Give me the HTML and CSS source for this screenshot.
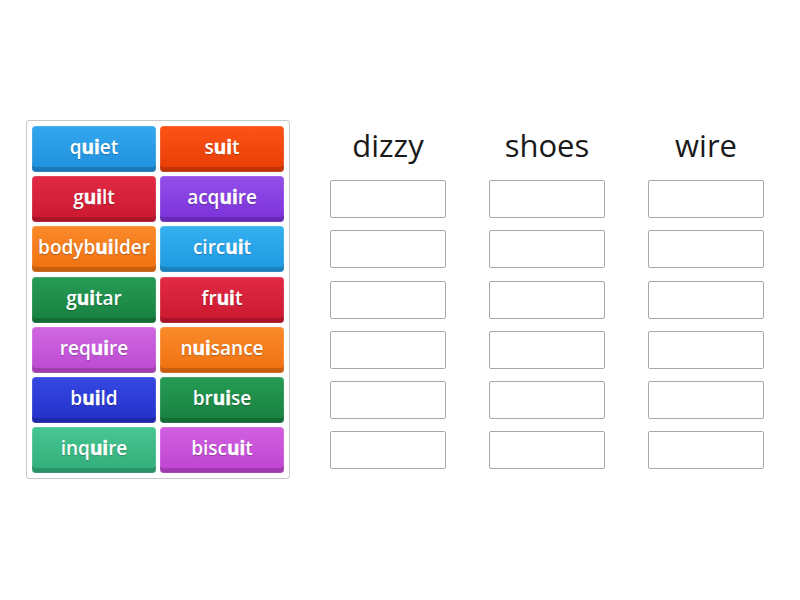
FILE: index.html
```html
<!DOCTYPE html>
<html lang="en">
<head>
    <meta charset="UTF-8">
    <meta name="viewport" content="width=device-width, initial-scale=1.0">
    <title>Group sort - ui words</title>
    <link rel="stylesheet" href="styles.css">
</head>
<body>

<div class="board">
    <!-- word tiles to drag -->
    <div class="tiles">
        <div class="tile blue">q<b>ui</b>et</div>
        <div class="tile orange-red">s<b>ui</b>t</div>
        <div class="tile red">g<b>ui</b>lt</div>
        <div class="tile purple">acq<b>ui</b>re</div>
        <div class="tile orange">bodyb<b>ui</b>lder</div>
        <div class="tile sky">circ<b>ui</b>t</div>
        <div class="tile green">g<b>ui</b>tar</div>
        <div class="tile red">fr<b>ui</b>t</div>
        <div class="tile pink">req<b>ui</b>re</div>
        <div class="tile orange">n<b>ui</b>sance</div>
        <div class="tile navy">b<b>ui</b>ld</div>
        <div class="tile green">br<b>ui</b>se</div>
        <div class="tile mint">inq<b>ui</b>re</div>
        <div class="tile magenta">bisc<b>ui</b>t</div>
    </div>

    <!-- target groups -->
    <div class="groups">
        <div class="group">
            <div class="group-title">dizzy</div>
            <div class="slot"></div>
            <div class="slot"></div>
            <div class="slot"></div>
            <div class="slot"></div>
            <div class="slot"></div>
            <div class="slot"></div>
        </div>
        <div class="group">
            <div class="group-title">shoes</div>
            <div class="slot"></div>
            <div class="slot"></div>
            <div class="slot"></div>
            <div class="slot"></div>
            <div class="slot"></div>
            <div class="slot"></div>
        </div>
        <div class="group">
            <div class="group-title">wire</div>
            <div class="slot"></div>
            <div class="slot"></div>
            <div class="slot"></div>
            <div class="slot"></div>
            <div class="slot"></div>
            <div class="slot"></div>
        </div>
    </div>
</div>

</body>
</html>
```

FILE: styles.css
```css
* {
    box-sizing: border-box;
    margin: 0;
    padding: 0;
}

body {
    font-family: 'Open Sans', 'Noto Sans', sans-serif;
    background-color: #fff;
    color: #1a1a1a;
    width: 800px;
    height: 600px;
    overflow: hidden;
}

.board {
    display: flex;
    align-items: flex-start;
    padding: 120px 0 0 26px;
}

.tiles {
    display: grid;
    grid-template-columns: 124px 124px;
    grid-auto-rows: 46px;
    column-gap: 4px;
    row-gap: 4.2px;
    padding: 5px;
    border: 1px solid #c8c8c8;
    border-radius: 3px;
}

.tile {
    display: flex;
    justify-content: center;
    align-items: center;
    padding-bottom: 4px;
    border-radius: 4px;
    color: #fff;
    font-size: 19px;
    font-weight: 600;
    white-space: nowrap;
    text-shadow: 0 1px 1px rgba(0, 0, 0, 0.25);
    box-shadow: inset 0 -5px 0 rgba(0, 0, 0, 0.16), inset 0 0 0 1px rgba(255, 255, 255, 0.12);
}

/* the "ui" letters are drawn heavier */
.tile b {
    font-weight: 700;
    -webkit-text-stroke: 0.5px #fff;
}

.blue { background: linear-gradient(#33a8ee, #1f8fdc); }
.orange-red { background: linear-gradient(#fb5216, #e63d06); }
.red { background: linear-gradient(#e22a45, #c9182f); }
.purple { background: linear-gradient(#9450ea, #7a2fd8); }
.orange { background: linear-gradient(#fb8a2a, #ee7010); }
.sky { background: linear-gradient(#35b0f0, #1e98e0); }
.green { background: linear-gradient(#269b55, #17803f); }
.pink { background: linear-gradient(#d068e2, #bb48d0); }
.navy { background: linear-gradient(#3648e2, #2230c8); }
.mint { background: linear-gradient(#48c693, #30ad78); }
.magenta { background: linear-gradient(#d25fe0, #be44d0); }

.groups {
    display: flex;
    gap: 43px;
    margin-left: 40px;
}

.group {
    display: flex;
    flex-direction: column;
    align-items: center;
    gap: 12.2px;
    width: 116px;
}

.group-title {
    font-size: 31px;
    line-height: 50px;
    margin-bottom: -2px;
    color: #1a1a1a;
}

.slot {
    width: 116px;
    height: 38px;
    border: 1px solid #a8a8a8;
    border-radius: 2px;
    background: #fff;
}
```
